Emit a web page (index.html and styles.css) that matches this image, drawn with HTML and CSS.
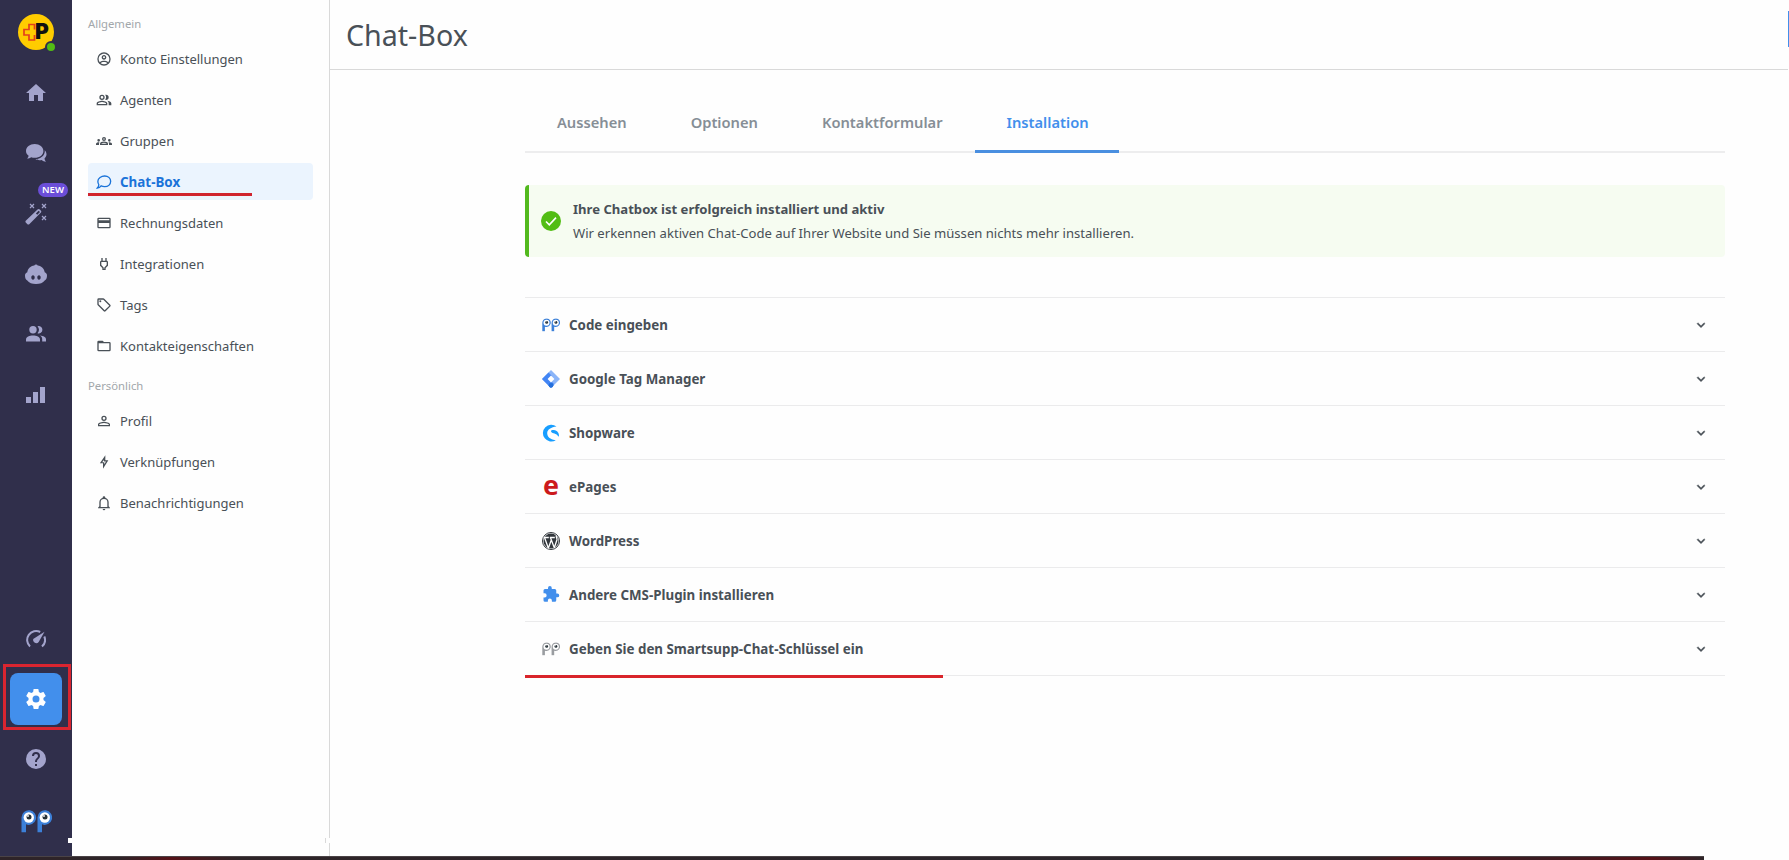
FILE: index.html
```html
<!DOCTYPE html>
<html lang="de">
<head>
	<meta charset="utf-8">
	<title>Chat-Box</title>
	<link rel="stylesheet" href="styles.css">
</head>
<body>
<svg width="0" height="0" class="defs">
	<symbol id="pp" viewBox="0 0 31 23">
		<path fill="currentColor" d="M.5 22.300V7.500a7.300 7.300 0 1 1 4.500 6.800v8zM16.500 22.300V7.500a7.300 7.300 0 1 1 4.500 6.800v8z"/>
		<circle cx="7.800" cy="7.500" r="5.200" fill="#fff"/><circle cx="23.800" cy="7.500" r="5.200" fill="#fff"/>
		<circle cx="8" cy="7" r="2.500" fill="#263238"/><circle cx="24" cy="7" r="2.500" fill="#263238"/>
		<circle cx="7" cy="6" r=".9" fill="#fff"/><circle cx="23" cy="6" r=".9" fill="#fff"/>
	</symbol>
	<symbol id="down" viewBox="0 0 24 24"><path fill="currentColor" stroke="currentColor" stroke-width=".6" d="M7.410 8.590 12 13.170l4.590-4.580L18 10l-6 6-6-6z"/></symbol>
</svg>
<div class="app">
	<nav class="rail">
		<div class="rail-item">
			<div class="avatar">
				<svg width="36" height="36" viewBox="0 0 36 36"><circle cx="18" cy="18" r="18" fill="#fc0"/><path d="M16.500 15.500v-5h-5.500v5H6V21h5v5h5.500v-5" fill="none" stroke="#e3401c" stroke-width="1.700"/></svg>
				<b>P</b>
				<i class="online"></i>
			</div>
		</div>
		<div class="rail-item"><svg width="24" height="24" viewBox="0 0 24 24"><path d="M10 20v-6h4v6h5v-8h3L12 3 2 12h3v8z"/></svg></div>
		<div class="rail-item"><svg width="21" height="18" viewBox="0 0 21 18"><path d="M8.700 0c4.900 0 8.700 3 8.700 6.900s-3.800 6.900-8.700 6.900c-1.200 0-2.500-.2-3.500-.6-1 .8-2.500 1.400-4.200 1.400.9-.8 1.500-1.900 1.600-2.900C1 10.500 0 8.800 0 6.900 0 3 3.800 0 8.700 0z"/><path d="M18.600 6.200c1.200 1 1.900 2.500 1.900 4.100 0 1.600-.8 3.100-2 4.100.1 1.100.7 2.400 1.500 3.300-1.700-.1-3.200-.8-4.200-1.700-2.200.6-4.700.3-6.400-.9 5-.1 9.400-3.500 9.400-7.900z"/></svg></div>
		<div class="rail-item"><span class="new">NEW</span>
			<svg class="wand" width="22" height="22" viewBox="0 0 22 22"><path fill-rule="evenodd" d="M12.500 6.600a1.600 1.600 0 0 1 2.300 0l.9.900a1.600 1.600 0 0 1 0 2.300L4.500 21a1.600 1.600 0 0 1-2.300 0L1 19.800a1.600 1.600 0 0 1 0-2.300zM13.600 7.700l-2.700 2.700 1.400 1.400L15 9.100z"/><path fill="none" stroke="currentColor" stroke-width="1.200" d="m5 1 4 4m0-4L5 5M17 1l4 4m0-4-4 4M17 13l4 4m0-4-4 4"/></svg></div>
		<div class="rail-item"><svg width="22" height="20" viewBox="0 0 22 20"><path fill-rule="evenodd" d="M9.300 1.600a1.800 1.800 0 0 1 3.400 0c4 .5 6.500 3.100 7 6.700 1.300.5 2.300 1.600 2.300 3.200 0 2.300-.8 4.500-2.300 5C18 19 15 20 11 20s-7-1-8.700-3.500C.8 16 0 13.800 0 11.500c0-1.600 1-2.700 2.300-3.200.5-3.600 3-6.200 7-6.700zM8 11.300c-1.100 0-1.700 1-1.700 2.200s.6 2.200 1.700 2.200 1.700-1 1.700-2.200-.6-2.200-1.700-2.200zm6 0c-1.100 0-1.700 1-1.700 2.200s.6 2.200 1.700 2.200 1.700-1 1.700-2.200-.6-2.200-1.700-2.200z"/></svg></div>
		<div class="rail-item"><svg width="20" height="16" viewBox="0 0 20 16"><path d="M0 15.500v-2.200C0 10.800 3.500 9.400 7 9.400s7 1.400 7 3.900v2.200z"/><circle cx="7" cy="3.800" r="3.700"/><path d="M11.500.3a3.700 3.700 0 1 1 0 7 5.400 5.400 0 0 0 0-7zM14 9.600c3.500.3 6 1.700 6 3.700v2.200h-3.800v-2.200c0-1.600-.8-2.800-2.200-3.700z"/></svg></div>
		<div class="rail-item"><svg width="20" height="16" viewBox="0 0 20 16"><path d="M0 10h5v6H0zM7 5h5v11H7zM14 0h5v16h-5z"/></svg></div>

		<div class="rail-item rail-bottom"><svg width="20" height="18" viewBox="0 0 20 18"><path fill="none" stroke="currentColor" stroke-width="2" d="M4 16.600A9 9 0 0 1 14.200 2M18.300 6.500A9 9 0 0 1 16 16.600"/><path d="M18.500 1.800 12.700 12A3.200 3.200 0 0 1 7.200 9z"/></svg></div>
		<div class="rail-item"><div class="settings"><svg width="24" height="24" viewBox="0 0 24 24"><path d="M12 15.500A3.500 3.500 0 0 1 8.500 12 3.500 3.500 0 0 1 12 8.500a3.500 3.500 0 0 1 3.500 3.500 3.500 3.500 0 0 1-3.500 3.500m7.430-2.530c.04-.32.07-.64.07-.97s-.03-.66-.07-1l2.110-1.630c.19-.15.24-.42.12-.64l-2-3.460c-.12-.22-.39-.31-.61-.22l-2.490 1c-.52-.39-1.060-.73-1.690-.98l-.37-2.650A.506.506 0 0 0 14 2h-4c-.25 0-.46.18-.5.420l-.37 2.650c-.63.25-1.170.59-1.690.98l-2.490-1c-.22-.09-.49 0-.61.220l-2 3.460c-.13.22-.07.49.12.640L4.570 11c-.04.34-.07.67-.07 1s.03.65.07.970l-2.110 1.660c-.19.15-.25.42-.12.640l2 3.460c.12.22.39.3.61.220l2.490-1.010c.52.4 1.060.74 1.690.99l.37 2.650c.04.24.25.42.5.420h4c.25 0 .46-.18.5-.42l.37-2.650c.63-.26 1.170-.59 1.690-.99l2.490 1.010c.22.08.49 0 .61-.22l2-3.460c.12-.22.07-.49-.12-.64z"/></svg></div></div>
		<div class="rail-item"><svg width="24" height="24" viewBox="0 0 24 24"><path d="M15.070 11.250l-.9.920C13.450 12.890 13 13.500 13 15h-2v-.5c0-1.110.45-2.110 1.170-2.830l1.240-1.260c.37-.36.59-.86.59-1.410a2 2 0 0 0-4 0H8a4 4 0 0 1 8 0c0 .88-.36 1.670-.93 2.250M13 19h-2v-2h2M12 2a10 10 0 1 0 0 20 10 10 0 0 0 0-20"/></svg></div>
		<div class="rail-item"><svg class="pp-logo brand" width="31" height="23"><use href="#pp"/></svg></div>
		<i class="notch"></i>
	</nav>

	<aside class="subnav">
		<h6>Allgemein</h6>
		<a><svg viewBox="0 0 24 24"><path d="M12 2a10 10 0 1 0 0 20 10 10 0 0 0 0-20M7.070 18.280C7.500 17.380 10.120 16.500 12 16.500s4.500.88 4.930 1.780A7.900 7.900 0 0 1 12 20c-1.860 0-3.570-.64-4.930-1.720m11.290-1.450c-1.430-1.740-4.900-2.330-6.360-2.330s-4.930.59-6.360 2.330A7.930 7.930 0 0 1 4 12c0-4.410 3.590-8 8-8s8 3.590 8 8c0 1.820-.62 3.500-1.640 4.830M12 6c-1.940 0-3.500 1.560-3.500 3.500S10.060 13 12 13s3.500-1.560 3.500-3.500S13.940 6 12 6m0 5a1.500 1.500 0 1 1 0-3 1.500 1.500 0 0 1 0 3"/></svg>Konto Einstellungen</a>
		<a><svg viewBox="0 0 24 24"><path d="M16.670 13.130C18.040 14.060 19 15.320 19 17v3h4v-3c0-2.180-3.570-3.470-6.330-3.870M15 12a4 4 0 1 0 0-8c-.47 0-.91.1-1.330.24a6 6 0 0 1 0 7.520c.42.14.86.24 1.330.24M9 12a4 4 0 1 0 0-8 4 4 0 0 0 0 8m0-6a2 2 0 1 1 0 4 2 2 0 0 1 0-4M9 13c-2.670 0-8 1.340-8 4v3h16v-3c0-2.660-5.330-4-8-4m6 5H3v-.99C3.200 16.290 6.300 15 9 15s5.800 1.290 6 2z"/></svg>Agenten</a>
		<a><svg viewBox="0 0 24 24"><path d="M4 13a2 2 0 1 0 0-4 2 2 0 0 0 0 4m1.130 1.100C4.760 14.040 4.390 14 4 14c-.99 0-1.930.21-2.780.58A2 2 0 0 0 0 16.430V18h4.500v-1.610c0-.83.23-1.610.63-2.290M20 13a2 2 0 1 0 0-4 2 2 0 0 0 0 4m4 3.430c0-.81-.48-1.530-1.220-1.850A7 7 0 0 0 20 14c-.39 0-.76.04-1.130.1.4.68.63 1.460.63 2.290V18H24zm-7.760-2.780A10.500 10.500 0 0 0 12 12.750c-1.630 0-3.070.39-4.240.9A3 3 0 0 0 6 16.390V18h12v-1.610c0-1.180-.68-2.260-1.760-2.740M8.070 16c.09-.23.13-.39.910-.69a8.300 8.300 0 0 1 6.040 0c.77.3.81.46.91.690zM12 6a3 3 0 1 0 0 6 3 3 0 0 0 0-6m0 4a1 1 0 1 1 0-2 1 1 0 0 1 0 2"/></svg>Gruppen</a>
		<a class="active"><svg viewBox="0 0 24 24"><path fill="none" stroke="currentColor" stroke-width="2" d="M13 3c5 0 9 3.300 9 8s-4 8-9 8c-2.200 0-4-.5-5.300-1.300C6.500 19.500 5 21 2 21c1.300-1.500 2.200-3.400 2.200-5C3 14.700 2.800 13 2.800 11 2.800 6.300 8 3 13 3z"/></svg>Chat-Box</a>
		<a><svg viewBox="0 0 24 24"><path d="M20 4H4a2 2 0 0 0-2 2v12a2 2 0 0 0 2 2h16a2 2 0 0 0 2-2V6a2 2 0 0 0-2-2m0 14H4v-6h16zm0-10H4V6h16z"/></svg>Rechnungsdaten</a>
		<a><svg viewBox="0 0 24 24"><path d="M16 9v4.660l-3.500 3.510V19h-1v-1.830L8 13.650V9zm0-6h-2v4h-4V3H8v4h-.01C6.900 6.990 6 7.890 6 8.980v5.520L9.500 18v3h5v-3l3.500-3.510V9c0-1.100-.9-2-2-2z"/></svg>Integrationen</a>
		<a><svg viewBox="0 0 24 24"><path d="m21.410 11.580-9-9A2 2 0 0 0 11 2H4a2 2 0 0 0-2 2v7c0 .55.22 1.050.59 1.420l9 9a2 2 0 0 0 2.820 0l7-7a2 2 0 0 0 0-2.840M13 20.010 4 11V4h7v-.01l9 9z"/><circle cx="6.500" cy="6.500" r="1.500"/></svg>Tags</a>
		<a><svg viewBox="0 0 24 24"><path d="M20 6h-8l-2-2H4a2 2 0 0 0-2 2v12a2 2 0 0 0 2 2h16a2 2 0 0 0 2-2V8a2 2 0 0 0-2-2m0 12H4V8h16z"/></svg>Kontakteigenschaften</a>
		<h6 class="personal">Persönlich</h6>
		<a><svg viewBox="0 0 24 24"><path d="M12 4a4 4 0 1 0 0 8 4 4 0 0 0 0-8m0 2a2 2 0 1 1 0 4 2 2 0 0 1 0-4m0 7c-2.670 0-9 1.340-9 4v3h18v-3c0-2.660-6.330-4-9-4m0 1.900c2.970 0 7.100 1.460 7.100 2.100v1.100H4.900V17c0-.64 4.130-2.100 7.100-2.100"/></svg>Profil</a>
		<a><svg viewBox="0 0 24 24"><path d="M14 2v7.500h4.500L10.500 22v-8H5.800zM12 9 9.200 12.200h3.200v3l2.600-4H12z" fill-rule="evenodd"/></svg>Verknüpfungen</a>
		<a><svg viewBox="0 0 24 24"><path d="M10 21h4a2 2 0 0 1-4 0m11-2v1H3v-1l2-2v-6c0-3.100 2.030-5.830 5-6.710V4a2 2 0 1 1 4 0v.29c2.970.88 5 3.610 5 6.710v6zm-4-8a5 5 0 0 0-10 0v7h10z"/></svg>Benachrichtigungen</a>
		<i class="notch-end"></i>
	</aside>

	<main>
		<header>
			<h1>Chat-Box</h1>
			<i class="edge"></i>
		</header>
		<div class="content">
			<div class="tabs">
				<a>Aussehen</a>
				<a>Optionen</a>
				<a>Kontaktformular</a>
				<a class="current">Installation</a>
			</div>
			<div class="alert">
				<svg width="20" height="20" viewBox="0 0 20 20"><circle cx="10" cy="10" r="10" fill="#52bd14"/><path d="m5 10.500 3.300 3.300L15 6.600" fill="none" stroke="#fff" stroke-width="1.600"/></svg>
				<div>
					<b>Ihre Chatbox ist erfolgreich installiert und aktiv</b>
					<p>Wir erkennen aktiven Chat-Code auf Ihrer Website und Sie müssen nichts mehr installieren.</p>
				</div>
			</div>
			<ul class="platforms">
				<li><svg class="pp-logo" viewBox="0 0 31 23"><use href="#pp"/></svg>Code eingeben<svg class="down"><use href="#down"/></svg></li>
				<li><svg viewBox="0 0 18 18"><path fill="#8ab4f8" d="m9 0 9 9-9 9-9-9z"/><path fill="#4285f4" d="m6.500 2.500 3.500 3.500-3 3 5 5-3 4-9-9z"/><path fill="#fff" d="m9 5.600 3.400 3.400L9 12.400 5.600 9z"/><circle cx="9" cy="15.300" r="2.400" fill="#246fdb"/></svg>Google Tag Manager<svg class="down"><use href="#down"/></svg></li>
				<li><svg viewBox="0 0 18 18"><path fill="#189eff" d="M14.500 2.500A8.400 8.400 0 1 0 13.800 16.200C11 15.800 5.200 14.500 5.200 9.200c0-3.800 4-6 9.300-6.700z"/><path fill="#189eff" d="M17 11.500c-.2-3.700-2.700-5.500-6.600-5.500-1.500 0-1.900 1.700-.6 2.500 2.200 1.200 5.200 1.200 6.700 4.200z"/></svg>Shopware<svg class="down"><use href="#down"/></svg></li>
				<li><b class="epages">e</b>ePages<svg class="down"><use href="#down"/></svg></li>
				<li><svg viewBox="0 0 18 18"><circle cx="9" cy="9" r="8.500" fill="#fff" stroke="#32373c"/><circle cx="9" cy="9" r="7.500" fill="#32373c"/><path d="m2.500 5.500 4 11M1.800 5.500h5M7.800 5.500h5M6.600 15.500 9.300 8M8.400 5.500l4 10.500M12.400 15.500l2.500-7.500c.6-2-1.500-3-.4-4.500" fill="none" stroke="#fff" stroke-width="1.300"/></svg>WordPress<svg class="down"><use href="#down"/></svg></li>
				<li><svg viewBox="0 1 24 24"><path fill="#428fec" d="M20.500 11H19V7a2 2 0 0 0-2-2h-4V3.500a2.500 2.500 0 0 0-5 0V5H4a2 2 0 0 0-2 2v3.800h1.500a2.700 2.700 0 0 1 0 5.400H2V20a2 2 0 0 0 2 2h3.800v-1.500a2.700 2.700 0 0 1 5.400 0V22H17a2 2 0 0 0 2-2v-4h1.500a2.500 2.500 0 0 0 0-5"/></svg>Andere CMS-Plugin installieren<svg class="down"><use href="#down"/></svg></li>
				<li class="marked"><svg class="pp-logo muted" viewBox="0 0 31 23"><use href="#pp"/></svg>Geben Sie den Smartsupp-Chat-Schlüssel ein<svg class="down"><use href="#down"/></svg></li>
			</ul>
		</div>
	</main>
</div>
<div class="taskbar"></div>
</body>
</html>
```
FILE: styles.css
```css
* {
	box-sizing: border-box;
}
body {
	margin: 0;
	height: 860px;
	overflow: hidden;
	background: #fefefe;
	color: #495057;
	font-family: "Noto Sans", "Open Sans", sans-serif;
	font-size: 13.1px;
}
svg {
	display: block;
	flex: none;
	fill: currentColor;
}
.defs {
	position: absolute;
}
.app {
	display: flex;
	height: 856px;
}
.rail {
	position: relative;
	display: flex;
	flex-direction: column;
	width: 72px;
	padding: 2px 0 6px;
	background: #302f4b;
	color: #a3a4cc;
}
.rail-item {
	position: relative;
	display: flex;
	align-items: center;
	justify-content: center;
	height: 60.4px;
	flex: none;
}
.rail-bottom {
	margin-top: auto;
}
.wand {
	margin-top: 2px;
}
.brand {
	margin: 3px 0 0 1px;
}
.avatar {
	position: relative;
	width: 36px;
	height: 36px;
}
.avatar b {
	position: absolute;
	left: 17px;
	top: 5px;
	color: #111;
	font: 900 21px/26px Inter, sans-serif;
}
.online {
	position: absolute;
	right: -3px;
	bottom: -3px;
	width: 12px;
	height: 12px;
	border: 2px solid #302f4b;
	border-radius: 50%;
	background: #52bd14;
}
.new {
	position: absolute;
	left: 38px;
	top: 0;
	width: 30px;
	height: 14px;
	border-radius: 7px;
	background: #6b4ed8;
	color: #fff;
	font-size: 9.5px;
	font-weight: 600;
	line-height: 14px;
	text-align: center;
}
.settings {
	position: relative;
	display: flex;
	align-items: center;
	justify-content: center;
	width: 52px;
	height: 52px;
	border-radius: 8px;
	background: #428fec;
	color: #fff;
}
.settings::after {
	content: "";
	position: absolute;
	left: -7px;
	top: -9px;
	width: 62px;
	height: 60px;
	border: 3px solid #da2530;
}
.pp-logo {
	color: #3c80d8;
}
.pp-logo.muted {
	color: #9a9da1;
}
.notch {
	position: absolute;
	right: 0;
	top: 838px;
	width: 4px;
	height: 5px;
	background: #fff;
}
.subnav {
	position: relative;
	width: 258px;
	padding: 14px 16px 0;
	border-right: 1px solid #d9d9d9;
}
.subnav h6 {
	margin: 0 0 6px;
	color: #a2a7ab;
	font-size: 11.3px;
	font-weight: 400;
	line-height: 20px;
}
.subnav .personal {
	margin-top: 12px;
}
.subnav a {
	display: flex;
	align-items: center;
	gap: 8px;
	height: 37px;
	margin-bottom: 4px;
	padding-left: 8px;
	border-radius: 4px;
	font-size: 13px;
}
.subnav a svg {
	width: 16px;
	height: 16px;
}
.subnav .active {
	position: relative;
	background: #ebf4fe;
	color: #1a73d9;
	font-size: 13.4px;
	font-weight: 700;
}
.active::after {
	content: "";
	position: absolute;
	left: 0;
	bottom: 4px;
	width: 164px;
	height: 3px;
	background: #d0242e;
}
.notch-end {
	position: absolute;
	right: -1px;
	top: 838px;
	width: 5px;
	height: 5px;
	border-left: 1px solid #d9d9d9;
	background: #fefefe;
}
main {
	flex: 1;
}
header {
	position: relative;
	height: 70px;
	margin-right: 1px;
	padding-left: 16px;
	border-bottom: 1px solid #d9d9d9;
}
h1 {
	margin: 0;
	font-size: 28.6px;
	font-weight: 400;
	line-height: 70px;
}
.edge {
	position: absolute;
	right: -1px;
	top: 11px;
	width: 1px;
	height: 36px;
	background: #428fec;
}
.content {
	width: 1200px;
	margin-left: 195px;
}
.tabs {
	display: flex;
	height: 83px;
	border-bottom: 2px solid #ededee;
	margin-bottom: 32px;
	color: #868e96;
	font-size: 14.7px;
	font-weight: 600;
}
.tabs a {
	height: 83px;
	padding: 0 32px;
	line-height: 104px;
}
.tabs .current {
	padding-right: 30px;
	border-bottom: 3px solid #4a8fe0;
	color: #428fec;
}
.alert {
	display: flex;
	align-items: center;
	gap: 12px;
	height: 72px;
	padding-left: 12px;
	border-left: 4px solid #52b91e;
	border-radius: 4px;
	background: #f6fcf1;
	line-height: 24px;
}
.alert b {
	display: block;
}
.alert p {
	margin: 0;
}
.platforms {
	margin: 40px 0 0;
	padding: 0;
	list-style: none;
	border-top: 1px solid #ebebec;
	font-size: 13.35px;
	font-weight: 700;
}
.platforms li {
	position: relative;
	display: flex;
	align-items: center;
	height: 54px;
	padding: 0 16px 0 17px;
	border-bottom: 1px solid #ebebec;
}
.platforms li > svg:first-child {
	width: 18px;
	height: 18px;
	margin-right: 9px;
}
.epages {
	width: 18px;
	margin: -4px 9px 0 0;
	color: #cc1a1c;
	font: 700 27px/18px "Open Sans", sans-serif;
	text-align: center;
}
.platforms .down {
	width: 16px;
	height: 16px;
	margin-left: auto;
}
.marked::after {
	content: "";
	position: absolute;
	left: 0;
	bottom: -3px;
	width: 418px;
	height: 3px;
	background: #d9252b;
}
.taskbar {
	width: 1704px;
	height: 4px;
	border-top: 1px solid #4a4346;
	background: linear-gradient(90deg, #2e2428, #2e2428 7%, #561218 10%, #2e2428 14%, #2b272d 75%, #2e2428 80%, #561218 83%, #3a1c22 90%, #561218 97%, #2e2428);
}
```
